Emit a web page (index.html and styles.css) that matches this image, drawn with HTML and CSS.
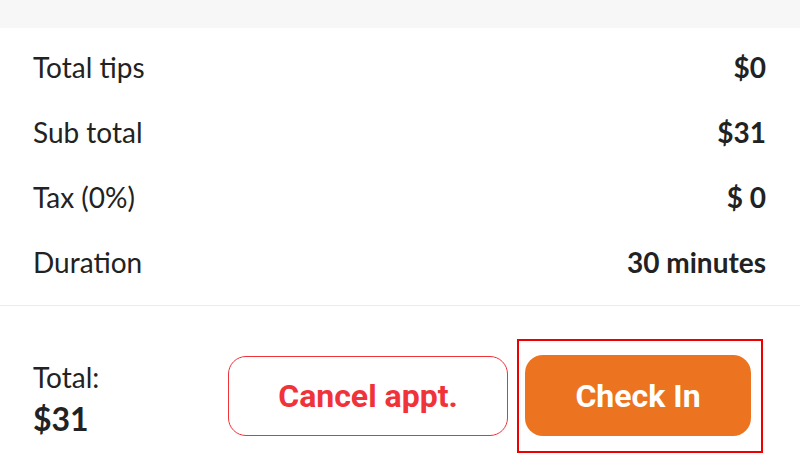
FILE: index.html
```html
<!DOCTYPE html>
<html>
<head>
<meta charset="utf-8">
<link rel="stylesheet" href="styles.css">
</head>
<body>
<div class="band"></div>
<section class="summary">
  <div class="row"><span class="label">Total tips</span><span class="value">$0</span></div>
  <div class="row"><span class="label">Sub total</span><span class="value">$31</span></div>
  <div class="row"><span class="label">Tax (0%)</span><span class="value">$ 0</span></div>
  <div class="row"><span class="label">Duration</span><span class="value">30 minutes</span></div>
</section>
<footer class="footer">
  <div class="total">
    <div class="total-label">Total:</div>
    <div class="total-value">$31</div>
  </div>
  <button class="btn btn-cancel">Cancel appt.</button>
  <div class="highlight">
    <button class="btn btn-checkin">Check In</button>
  </div>
</footer>
</body>
</html>
```

FILE: styles.css
```css
html, body {
  margin: 0;
  padding: 0;
  background: #ffffff;
  width: 800px;
  height: 471px;
  overflow: hidden;
  font-family: "Lato", "Liberation Sans", sans-serif;
  color: #222222;
}
.band {
  height: 28px;
  background: #f7f7f7;
}
.summary {
  padding: 6px 34px 11px 33px;
  border-bottom: 1px solid #ebebeb;
}
.row {
  height: 65px;
  display: flex;
  align-items: center;
  justify-content: space-between;
  font-size: 28px;
}
.label {
  font-weight: 400;
}
.value {
  font-weight: 700;
}
.footer {
  display: flex;
  align-items: center;
  padding: 33px 37px 18px 33px;
}
.total {
  flex: 1;
  font-size: 28px;
  line-height: 42px;
  padding-top: 4px;
}
.total-label {
  font-weight: 400;
}
.total-value {
  font-weight: 700;
  font-size: 32px;
}
.btn {
  font-family: "Roboto", "Liberation Sans", sans-serif;
  font-weight: 700;
  font-size: 32px;
  border-radius: 18px;
  cursor: pointer;
  padding: 0;
}
.btn-cancel {
  width: 280px;
  height: 80px;
  background: #ffffff;
  border: 1.5px solid #ef3339;
  color: #ef3339;
  margin-right: 9px;
}
.highlight {
  border: 2px solid #ee0000;
  padding: 14px 10px 15px 6px;
}
.btn-checkin {
  display: block;
  width: 226px;
  height: 81px;
  background: #ec7320;
  border: none;
  color: #ffffff;
}
```
